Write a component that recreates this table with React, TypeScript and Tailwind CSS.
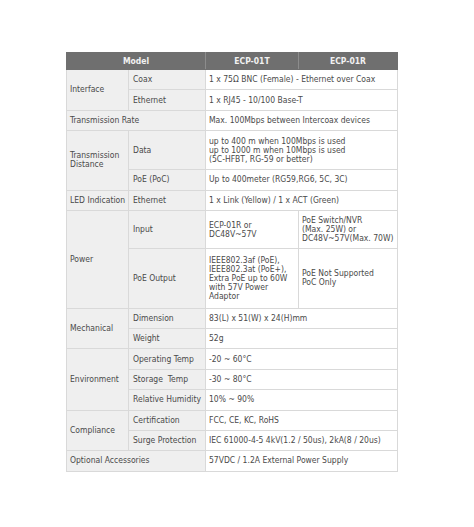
import React from "react";

const L = "bg-[#efefef] border border-[#d9d9d9] px-[3px] align-middle text-left font-normal";
const S = "bg-[#efefef] border border-[#d9d9d9] pl-[4px] pr-[2px] align-middle text-left font-normal";
const V = "bg-white border border-[#d9d9d9] px-[3px] align-middle text-left";
const R = "h-[20.4px]";

export default function App() {
  return (
    <div className="min-h-[527px] w-[474px] bg-white pt-[52px] pl-[66px]">
      <table
        className="border-collapse table-fixed w-[331px] text-[#4a4a4a] text-[8.5px] leading-[9px]"
        style={{ fontFamily: '"DejaVu Sans Condensed", Tahoma, sans-serif' }}
      >
        <colgroup>
          <col className="w-[62px]" />
          <col className="w-[77px]" />
          <col className="w-[93px]" />
          <col className="w-[99px]" />
        </colgroup>
        <thead>
          <tr className="h-[17px] bg-[#6f6f6f] text-[#f2f2f2] font-bold">
            <th colSpan={2} className="border border-[#6f6f6f] border-r-[#8c8c8c] text-center font-bold">Model</th>
            <th className="border border-[#6f6f6f] border-r-[#8c8c8c] text-center font-bold">ECP-01T</th>
            <th className="border border-[#6f6f6f] text-center font-bold">ECP-01R</th>
          </tr>
        </thead>
        <tbody>
          <tr className={R}>
            <th rowSpan={2} className={L}>Interface</th>
            <td className={S}>Coax</td>
            <td colSpan={2} className={V}>1 x 75Ω BNC (Female) - Ethernet over Coax</td>
          </tr>
          <tr className={R}>
            <td className={S}>Ethernet</td>
            <td colSpan={2} className={V}>1 x RJ45 - 10/100 Base-T</td>
          </tr>
          <tr className={R}>
            <th colSpan={2} className={L}>Transmission Rate</th>
            <td colSpan={2} className={V}>Max. 100Mbps between Intercoax devices</td>
          </tr>
          <tr className="h-[39px]">
            <th rowSpan={2} className={L}>Transmission<br />Distance</th>
            <td className={S}>Data</td>
            <td colSpan={2} className={V}>
              up to 400 m when 100Mbps is used<br />
              up to 1000 m when 10Mbps is used<br />
              (5C-HFBT, RG-59 or better)
            </td>
          </tr>
          <tr className={R}>
            <td className={S}>PoE (PoC)</td>
            <td colSpan={2} className={V}>Up to 400meter (RG59,RG6, 5C, 3C)</td>
          </tr>
          <tr className={R}>
            <th className={`${L} whitespace-nowrap`}>LED Indication</th>
            <td className={S}>Ethernet</td>
            <td colSpan={2} className={V}>1 x Link (Yellow) / 1 x ACT (Green)</td>
          </tr>
          <tr className="h-[38.3px]">
            <th rowSpan={2} className={L}>Power</th>
            <td className={S}>Input</td>
            <td className={V}>ECP-01R or<br />DC48V~57V</td>
            <td className={V}>PoE Switch/NVR<br />(Max. 25W) or<br />DC48V~57V(Max. 70W)</td>
          </tr>
          <tr className="h-[59.3px]">
            <td className={S}>PoE Output</td>
            <td className={V}>
              IEEE802.3af (PoE),<br />
              IEEE802.3at (PoE+),<br />
              Extra PoE up to 60W<br />
              with 57V Power<br />
              Adaptor
            </td>
            <td className={V}>PoE Not Supported<br />PoC Only</td>
          </tr>
          <tr className={R}>
            <th rowSpan={2} className={L}>Mechanical</th>
            <td className={S}>Dimension</td>
            <td colSpan={2} className={V}>83(L) x 51(W) x 24(H)mm</td>
          </tr>
          <tr className={R}>
            <td className={S}>Weight</td>
            <td colSpan={2} className={V}>52g</td>
          </tr>
          <tr className={R}>
            <th rowSpan={3} className={L}>Environment</th>
            <td className={S}>Operating Temp</td>
            <td colSpan={2} className={V}>-20 ~ 60°C</td>
          </tr>
          <tr className={R}>
            <td className={S}>Storage&nbsp; Temp</td>
            <td colSpan={2} className={V}>-30 ~ 80°C</td>
          </tr>
          <tr className={R}>
            <td className={`${S} whitespace-nowrap`}>Relative Humidity</td>
            <td colSpan={2} className={V}>10% ~ 90%</td>
          </tr>
          <tr className={R}>
            <th rowSpan={2} className={L}>Compliance</th>
            <td className={S}>Certification</td>
            <td colSpan={2} className={V}>FCC, CE, KC, RoHS</td>
          </tr>
          <tr className={R}>
            <td className={`${S} whitespace-nowrap`}>Surge Protection</td>
            <td colSpan={2} className={V}>IEC 61000-4-5 4kV(1.2 / 50us), 2kA(8 / 20us)</td>
          </tr>
          <tr className={R}>
            <th colSpan={2} className={L}>Optional Accessories</th>
            <td colSpan={2} className={V}>57VDC / 1.2A External Power Supply</td>
          </tr>
        </tbody>
      </table>
    </div>
  );
}
